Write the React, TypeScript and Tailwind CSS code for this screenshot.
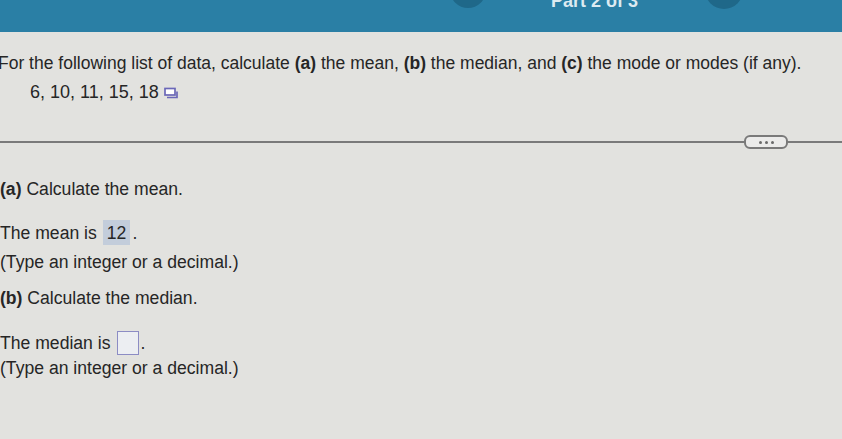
import React from 'react';

const font = { fontFamily: '"Liberation Sans", Arial, sans-serif' };

const DataIcon = () => (
  <svg width="15" height="13" viewBox="0 0 15 13" className="ml-[5px] mt-[3px]">
    <rect x="1" y="1.5" width="10" height="6.5" fill="#fff" stroke="#6b68b8" strokeWidth="1.7" />
    <path d="M3 10.5 H13 V4.5" fill="none" stroke="#6b68b8" strokeWidth="1.7" />
  </svg>
);

export default function App() {
  return (
    <div className="w-[842px] h-[439px] overflow-hidden bg-[#e2e2df] text-[#262626]" style={font}>
      {/* header band */}
      <div className="relative h-[32px] bg-[#2a7fa5] overflow-hidden">
        <div className="absolute left-[450px] -top-[30px] w-[36px] h-[38px] rounded-full bg-[#1f6889]" />
        <div className="absolute left-[705px] -top-[29px] w-[38px] h-[38px] rounded-full bg-[#1f6889]" />
        <div className="absolute left-[551px] -top-[12px] text-[18px] font-bold text-[#dceaf1]">Part 2 of 3</div>
      </div>

      <div className="pt-[20px]">
        <p className="-ml-[2px] text-[17.5px] leading-[22px] whitespace-nowrap">
          For the following list of data, calculate <b>(a)</b> the mean, <b>(b)</b> the median, and <b>(c)</b> the mode or modes (if any).
        </p>
        <div className="flex items-center pl-[30px] mt-[7px] text-[18px] leading-[22px]">
          <span>6, 10, 11, 15, 18</span>
          <DataIcon />
        </div>
      </div>

      {/* divider with more button */}
      <div className="flex items-center mt-[32px]">
        <div className="flex-1 h-[2px] bg-[#7a7a7a]" />
        <div className="w-[44px] h-[14px] rounded-[6px] border-2 border-[#7a7a7a] bg-[#ebebea] flex items-center justify-center gap-[3px]">
          <span className="w-[3px] h-[3px] rounded-full bg-[#6a6a6a]" />
          <span className="w-[3px] h-[3px] rounded-full bg-[#6a6a6a]" />
          <span className="w-[3px] h-[3px] rounded-full bg-[#6a6a6a]" />
        </div>
        <div className="w-[54px] h-[2px] bg-[#7a7a7a]" />
      </div>

      <div className="text-[17.6px] leading-[22px]">
        <p className="mt-[29px]"><b>(a)</b> Calculate the mean.</p>
        <div className="flex items-center mt-[20px]">
          <span>The mean is</span>
          <span className="ml-[6px] px-[4px] h-[25px] flex items-center bg-[#c3cddb]">12</span>
          <span className="ml-[2px]">.</span>
        </div>
        <p className="mt-[6px]">(Type an integer or a decimal.)</p>
        <p className="mt-[14px]"><b>(b)</b> Calculate the median.</p>
        <div className="flex items-center mt-[22px]">
          <span>The median is</span>
          <span className="ml-[6px] w-[22px] h-[24px] border border-[#8c8cc4] bg-[#eceef2]" />
          <span className="ml-[2px]">.</span>
        </div>
        <p className="mt-[2px]">(Type an integer or a decimal.)</p>
      </div>
    </div>
  );
}
